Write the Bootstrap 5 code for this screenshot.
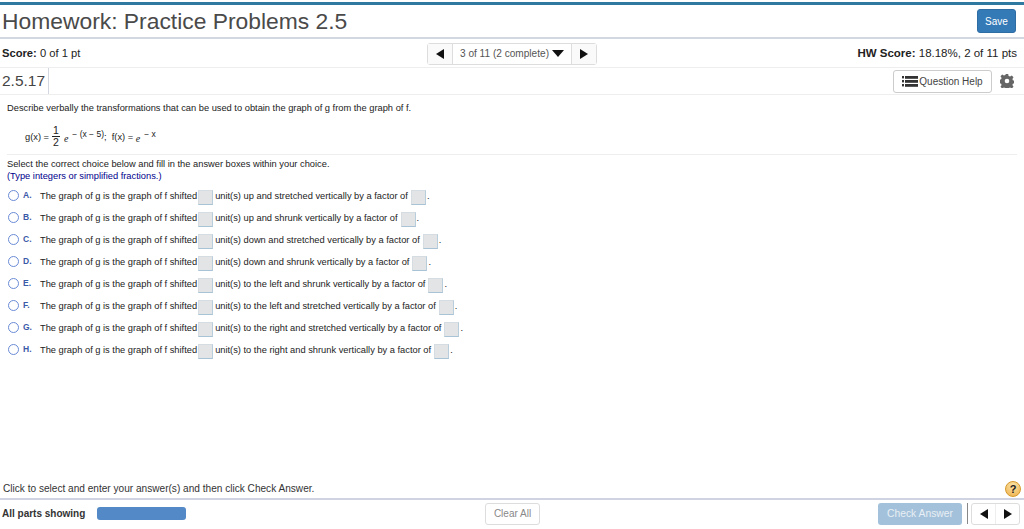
<!DOCTYPE html>
<html lang="en">
<head>
  <meta charset="UTF-8" />
  <title>Homework: Practice Problems 2.5</title>
  <link href="https://cdn.jsdelivr.net/npm/bootstrap@5.3.0/dist/css/bootstrap.min.css" rel="stylesheet" />
  <style>
    html, body { height: 529px; overflow: hidden; }
    body { font-family: "Liberation Sans", Arial, sans-serif; color: #333; background: #fff; display: flex; flex-direction: column; }
    .top-rule { height: 3px; margin-top: 2px; background: #2f78a0; }
    .title-bar { height: 34px; border-bottom: 2px solid #d3d8e0; padding: 0 8px 0 2px; }
    .hw-title { font-size: 22.85px; font-weight: 400; color: #4a4a4a; margin: 0; line-height: 32px; }
    .save-btn { background: #337ab7; border: 1px solid #2e6da4; color: #fff; font-size: 10px; width: 39px; height: 24px; padding: 0; border-radius: 3px; }
    .score-bar { height: 29px; border-bottom: 1px solid #eee; padding: 1px 7px 0 2px; color: #222; }
    .score-left { width: 404px; font-size: 11.2px; }
    .score-right { width: 399px; font-size: 11.5px; }
    .pager { height: 22px; border: 1px solid #ddd; border-radius: 3px; font-size: 10.1px; color: #555; }
    .pager-arrow { width: 24px; height: 100%; background: #fafafa; }
    .pager-mid { width: 120px; height: 100%; border-left: 1px solid #ddd; border-right: 1px solid #ddd; gap: 3px; }
    .tri { width: 0; height: 0; border-style: solid; display: inline-block; }
    .tri-l { border-width: 5.5px 8px 5.5px 0; border-color: transparent #111 transparent transparent; }
    .tri-r { border-width: 5.5px 0 5.5px 8px; border-color: transparent transparent transparent #111; }
    .tri-d { border-width: 7px 6px 0 6px; border-color: #111 transparent transparent transparent; }
    .q-bar { height: 27px; border-bottom: 1px solid #eee; padding-right: 10px; }
    .q-num { font-size: 15.5px; color: #444; width: 49px; height: 100%; padding-left: 2px; border-right: 1px solid #d3d8e0; line-height: 26px; }
    .help-btn { height: 23px; width: 99px; border: 1px solid #ccc; border-radius: 3px; background: #fff; font-size: 10px; color: #444; padding: 0; gap: 1px; }
    .q-body { flex: 1 1 auto; padding: 7px 7px 0; font-size: 9.3px; color: #222; min-height: 0; }
    .q-line { line-height: 12px; }
    .formula { height: 36px; padding-left: 18px; margin-top: 4px; }
    .frac { line-height: 11px; margin: 0 4px 0 3px; font-size: 10.5px; text-align: center; }
    .frac-top { border-bottom: 1px solid #222; padding: 0 1px; }
    .base-txt { margin-top: 4px; white-space: pre; }
    .ital-e { font-family: "Liberation Serif", serif; font-style: italic; font-size: 10px; margin-top: 4px; }
    .sup-x { font-size: 8.5px; margin-top: -4px; margin-left: 4px; white-space: pre; }
    .q-rule { border-top: 1px solid #eee; margin: 0 0 3px; }
    .hint-line { color: #00008b; line-height: 12px; }
    .choices { margin-top: 4px; }
    .choice-row { height: 22px; white-space: nowrap; }
    .radio-dot { width: 11px; height: 11px; border: 1.5px solid #6a8bd6; border-radius: 50%; margin: 0 4px 4px 1px; background: #fff; flex: none; }
    .choice-letter { width: 17px; color: #3b5aa8; font-weight: 700; font-size: 8.5px; margin-bottom: 4px; flex: none; }
    .blank-box { width: 15px; height: 15px; background: #e2e4e6; border: 1px solid #d5dde3; border-bottom-color: #a9c3d6; border-right-color: #b9cedd; margin: 0 2px 0 1px; flex: none; }
    .blank-box ~ .blank-box { margin-left: 3px; margin-right: 1px; }
    .foot-note { height: 22px; padding: 2px 3px 0; font-size: 10.1px; color: #333; border-bottom: 2px solid #d0d3e2; }
    .help-ball { width: 16px; height: 16px; border-radius: 50%; background: radial-gradient(circle at 50% 25%, #fbe3a6, #eeb04a); border: 1px solid #d69a2c; font-size: 11px; font-weight: 700; color: #222; line-height: 1; }
    .foot-bar { height: 29px; padding: 0 4px 2px 2px; }
    .parts-label { font-size: 10px; font-weight: 700; color: #333; width: 95px; }
    .parts-pill { width: 89px; height: 13px; background: #5389c6; border-radius: 3px; }
    .clear-btn { width: 55px; height: 22px; border: 1px solid #ddd; border-radius: 3px; background: #fff; color: #888; font-size: 10px; padding: 0; margin-left: 299px; }
    .check-btn { width: 84px; height: 22px; background: #a3c1da; border: 0; border-radius: 3px; color: #e8eff5; font-size: 10.3px; padding: 0; }
    .btn-sep { width: 1px; height: 21px; background: #888; margin: 0 3px 0 5px; }
    .mini-pager { width: 49px; height: 22px; border: 1px solid #ddd; border-radius: 3px; }
    .mini-pager > span { flex: 1; height: 100%; }
    .mini-pager > span + span { border-left: 1px solid #eee; }
  </style>
</head>
<body>
  <div class="top-rule"></div>

  <div class="title-bar d-flex align-items-center justify-content-between">
    <h1 class="hw-title">Homework: Practice Problems 2.5</h1>
    <button class="save-btn" type="button">Save</button>
  </div>

  <div class="score-bar d-flex align-items-center justify-content-between">
    <div class="score-left"><b>Score:</b> 0 of 1 pt</div>
    <div class="pager d-flex align-items-center">
      <span class="pager-arrow d-flex align-items-center justify-content-center"><i class="tri tri-l"></i></span>
      <span class="pager-mid d-flex align-items-center justify-content-center">3 of 11 (2 complete) <i class="tri tri-d"></i></span>
      <span class="pager-arrow d-flex align-items-center justify-content-center"><i class="tri tri-r"></i></span>
    </div>
    <div class="score-right text-end"><b>HW Score:</b> 18.18%, 2 of 11 pts</div>
  </div>

  <div class="q-bar d-flex align-items-center justify-content-between">
    <div class="q-num">2.5.17</div>
    <div class="d-flex align-items-center gap-2">
      <button class="help-btn d-flex align-items-center justify-content-center" type="button">
        <svg width="16" height="11" viewBox="0 0 16 11"><g fill="#333"><rect x="0" y="0" width="2" height="2.4"/><rect x="0" y="4" width="2" height="2.4"/><rect x="0" y="8" width="2" height="2.4"/><rect x="3" y="0" width="13" height="2.8"/><rect x="3" y="4" width="13" height="2.8"/><rect x="3" y="8" width="13" height="2.8"/></g></svg>
        Question Help
      </button>
      <svg width="14" height="14" viewBox="0 0 14 14"><path fill="#666" d="M5.800 0h2.400l.4 2 1.500.6 1.700-1.100 1.700 1.700-1.100 1.700.6 1.500 2 .4v2.400l-2 .4-.6 1.500 1.100 1.700-1.700 1.700-1.700-1.100-1.500.6-.4 2H5.800l-.4-2-1.500-.6-1.700 1.100-1.700-1.700 1.100-1.700-.6-1.500-2-.4V5.800l2-.4.6-1.500-1.100-1.700 1.700-1.700 1.700 1.100 1.500-.6z"/><circle cx="7" cy="7" r="2.300" fill="#fff"/></svg>
    </div>
  </div>

  <div class="q-body">
    <div class="q-line">Describe verbally the transformations that can be used to obtain the graph of g from the graph of f.</div>
    <div class="formula d-flex align-items-center">
      <span class="base-txt">g(x) =</span>
      <span class="frac"><div class="frac-top">1</div><div>2</div></span>
      <span class="ital-e">e</span><span class="sup-x">&minus; (x &minus; 5)</span><span class="base-txt">;  f(x) = </span><span class="ital-e">e</span><span class="sup-x">&minus; x</span>
    </div>
    <div class="q-rule"></div>
    <div class="q-line">Select the correct choice below and fill in the answer boxes within your choice.</div>
    <div class="hint-line">(Type integers or simplified fractions.)</div>
    <div class="choices">
      <div class="choice-row d-flex align-items-center"><span class="radio-dot"></span><span class="choice-letter">A.</span>The graph of g is the graph of f shifted<span class="blank-box"></span>unit(s) up and stretched vertically by a factor of<span class="blank-box"></span>.</div>
      <div class="choice-row d-flex align-items-center"><span class="radio-dot"></span><span class="choice-letter">B.</span>The graph of g is the graph of f shifted<span class="blank-box"></span>unit(s) up and shrunk vertically by a factor of<span class="blank-box"></span>.</div>
      <div class="choice-row d-flex align-items-center"><span class="radio-dot"></span><span class="choice-letter">C.</span>The graph of g is the graph of f shifted<span class="blank-box"></span>unit(s) down and stretched vertically by a factor of<span class="blank-box"></span>.</div>
      <div class="choice-row d-flex align-items-center"><span class="radio-dot"></span><span class="choice-letter">D.</span>The graph of g is the graph of f shifted<span class="blank-box"></span>unit(s) down and shrunk vertically by a factor of<span class="blank-box"></span>.</div>
      <div class="choice-row d-flex align-items-center"><span class="radio-dot"></span><span class="choice-letter">E.</span>The graph of g is the graph of f shifted<span class="blank-box"></span>unit(s) to the left and shrunk vertically by a factor of<span class="blank-box"></span>.</div>
      <div class="choice-row d-flex align-items-center"><span class="radio-dot"></span><span class="choice-letter">F.</span>The graph of g is the graph of f shifted<span class="blank-box"></span>unit(s) to the left and stretched vertically by a factor of<span class="blank-box"></span>.</div>
      <div class="choice-row d-flex align-items-center"><span class="radio-dot"></span><span class="choice-letter">G.</span>The graph of g is the graph of f shifted<span class="blank-box"></span>unit(s) to the right and stretched vertically by a factor of<span class="blank-box"></span>.</div>
      <div class="choice-row d-flex align-items-center"><span class="radio-dot"></span><span class="choice-letter">H.</span>The graph of g is the graph of f shifted<span class="blank-box"></span>unit(s) to the right and shrunk vertically by a factor of<span class="blank-box"></span>.</div>
    </div>
  </div>

  <div class="foot-note d-flex align-items-center justify-content-between">
    <span>Click to select and enter your answer(s) and then click Check Answer.</span>
    <span class="help-ball d-flex align-items-center justify-content-center">?</span>
  </div>
  <div class="foot-bar d-flex align-items-center">
    <span class="parts-label">All parts showing</span>
    <span class="parts-pill"></span>
    <button class="clear-btn" type="button">Clear All</button>
    <span class="ms-auto d-flex align-items-center">
      <button class="check-btn" type="button">Check Answer</button>
      <span class="btn-sep"></span>
      <span class="mini-pager d-flex align-items-center">
        <span class="d-flex align-items-center justify-content-center"><i class="tri tri-l"></i></span>
        <span class="d-flex align-items-center justify-content-center"><i class="tri tri-r"></i></span>
      </span>
    </span>
  </div>
  <script src="https://cdn.jsdelivr.net/npm/bootstrap@5.3.0/dist/js/bootstrap.bundle.min.js"></script>
</body>
</html>
